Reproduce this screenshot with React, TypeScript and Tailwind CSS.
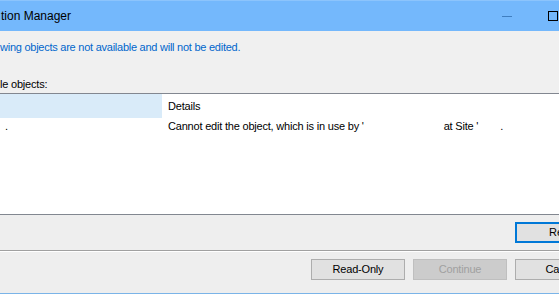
import React from 'react';

function Button({ label, disabled }: { label: string; disabled?: boolean }) {
  const cls = disabled
    ? 'border-[#bfbfbf] bg-[#cccccc] text-[#a0a0a0]'
    : 'border-[#adadad] bg-[#e1e1e1] text-black';
  return (
    <div className={`flex h-[21px] w-[94px] shrink-0 items-center justify-center border tracking-[-0.2px] ${cls}`}>
      {label}
    </div>
  );
}

export default function App() {
  return (
    <div className="flex h-[294px] w-[559px] flex-col overflow-hidden bg-[#f0f0f0] text-[11px] text-black" style={{ fontFamily: '"Liberation Sans", Arial, sans-serif' }}>
      {/* title bar */}
      <div className="flex h-[31px] shrink-0 items-center border-t border-[#8cc4fc] bg-[#74b8fc]">
        <span className="pl-px text-[12px] text-black">tion Manager</span>
        <div className="ml-auto mr-[36px] h-px w-[10px] bg-[#3f7ec0]" />
        <div className="mr-px h-[10px] w-[10px] border border-black" />
      </div>

      <div className="h-[9px] shrink-0" />
      <div className="h-[14px] shrink-0 leading-[14px] tracking-[-0.25px] text-[#0066cc]">wing objects are not available and will not be edited.</div>
      <div className="h-[23px] shrink-0" />
      <div className="h-[14px] shrink-0 leading-[14px] tracking-[-0.2px]">le objects:</div>
      <div className="h-[2px] shrink-0" />

      {/* list */}
      <div className="flex h-[122px] shrink-0 flex-col border-y border-[#828790] bg-white tracking-[-0.2px]">
        <div className="flex h-[24px] shrink-0 items-center">
          <div className="h-full w-[162px] bg-[#d9ebf9]" />
          <span className="pl-[6px]">Details</span>
        </div>
        <div className="flex h-[17px] items-center">
          <div className="w-[162px] pl-[5px]">.</div>
          <span className="pl-[6px] whitespace-pre">Cannot edit the object, which is in use by '</span>
          <span className="w-[80px]" />
          <span className="whitespace-pre">at Site '</span>
          <span className="w-[22px]" />
          <span>.</span>
        </div>
      </div>

      <div className="flex h-[35px] shrink-0 items-center bg-[#eeeeee]">
        <div className="ml-auto mr-[-50px]">
          <div className="flex h-[21px] w-[94px] items-center justify-center border-2 border-[#0078d7] bg-[#e1e1e1] pr-[12px]">Re</div>
        </div>
      </div>
      <div className="h-px shrink-0 bg-[#a0a0a0]" />
      <div className="h-px shrink-0 bg-white" />

      <div className="flex flex-1 items-start gap-[8px] bg-[#eeeeee] pl-[311px] pt-[7px]">
        <Button label="Read-Only" />
        <Button label="Continue" disabled />
        <Button label="Cancel" />
      </div>
      <div className="h-px shrink-0 bg-[#7ab4e8]" />
    </div>
  );
}
